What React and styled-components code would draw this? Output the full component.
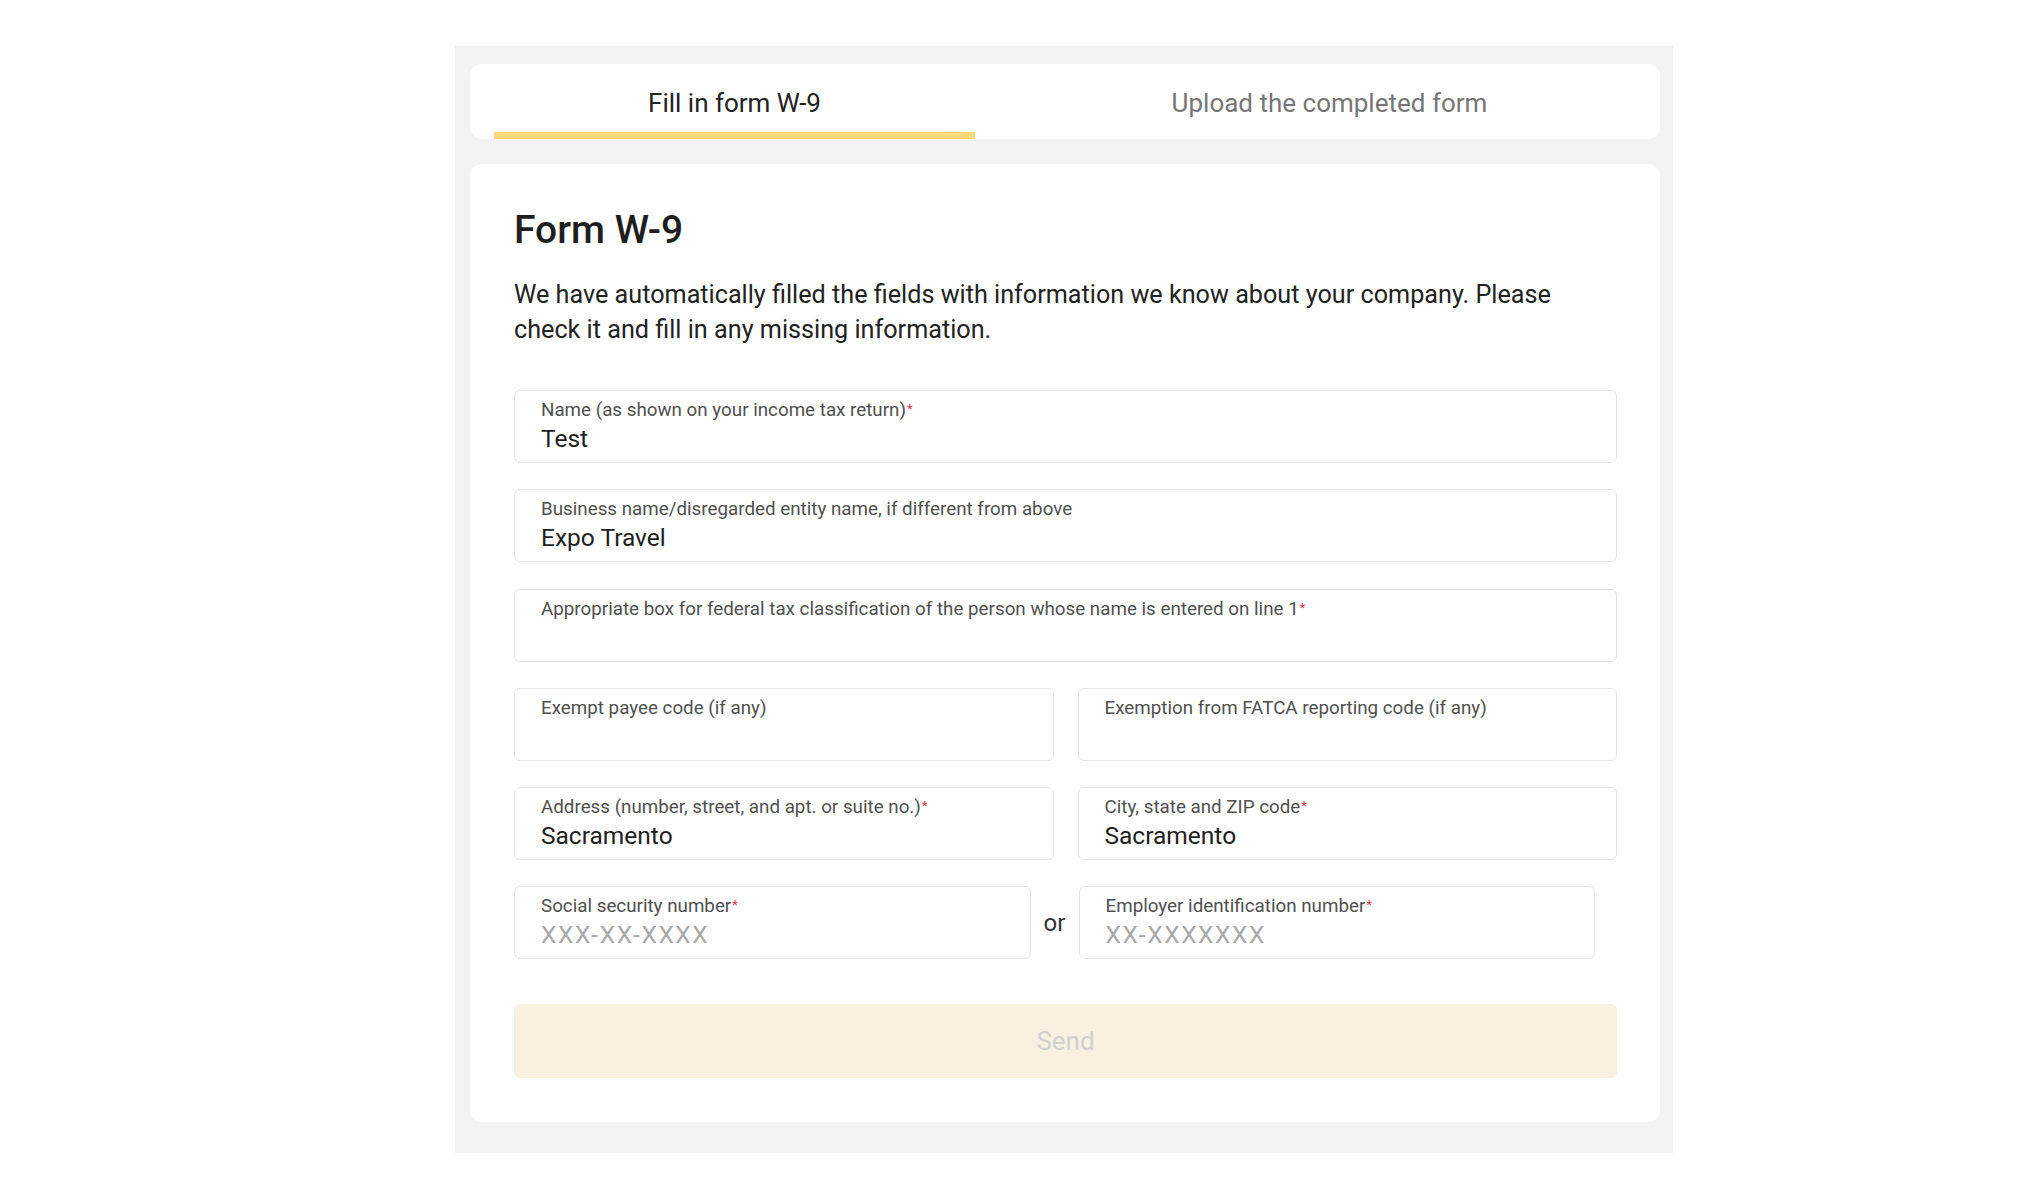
import React, { useState } from "react";
import styled, { createGlobalStyle } from "styled-components";

const GlobalStyle = createGlobalStyle`
  body {
    margin: 0;
    background: #ffffff;
    font-family: Roboto, "Liberation Sans", Arial, sans-serif;
    color: #222222;
  }
`;

const Page = styled.div`
  padding: 46px 0 48px 455px;
`;

const Panel = styled.div`
  width: 1218px;
  box-sizing: border-box;
  background-color: #f3f3f3;
  padding: 18px 13px 31px 15px;
  display: flex;
  flex-direction: column;
  gap: 25px;
`;

const TabBar = styled.div`
  display: grid;
  grid-template-columns: 1fr 1fr;
  height: 75px;
  background: #ffffff;
  border-radius: 12px;
`;

const Tab = styled.button`
  all: unset;
  cursor: pointer;
  justify-self: start;
  width: 481px;
  margin-left: 24px;
  box-sizing: border-box;
  display: flex;
  align-items: center;
  justify-content: center;
  padding-top: 9px;
  font-size: 26px;
  color: ${(p) => (p.active ? "#222222" : "#767676")};
  border-bottom: 7px solid ${(p) => (p.active ? "#ffd97c" : "transparent")};
`;

const Card = styled.div`
  background: #ffffff;
  border-radius: 12px;
  padding: 42px 43px 44px 44px;
`;

const Title = styled.h1`
  margin: 0;
  font-size: 39px;
  line-height: 48px;
  font-weight: 500;
  color: #1e1e1e;
`;

const Intro = styled.p`
  margin: 23px 0 43px;
  font-size: 25.2px;
  line-height: 35px;
  color: #222222;
`;

const Fields = styled.div`
  display: flex;
  flex-direction: column;
  gap: 26.3px;
`;

const Row = styled.div`
  display: grid;
  grid-template-columns: ${(p) => (p.split ? "1fr 48px 1fr" : "1fr 1fr")};
  column-gap: ${(p) => (p.split ? "0" : "24px")};
  padding-right: ${(p) => (p.split ? "22px" : "0")};
`;

const Field = styled.label`
  display: flex;
  flex-direction: column;
  height: 73px;
  box-sizing: border-box;
  padding: 8px 26px 0;
  border: 1.5px solid #e5e5e5;
  border-radius: 6px;
  background: #ffffff;
`;

const Label = styled.span`
  font-size: 18.8px;
  line-height: 22px;
  color: #505050;
  white-space: nowrap;
`;

const Required = styled.sup`
  color: #e5333a;
  font-size: 13px;
  vertical-align: top;
  position: relative;
  top: -1px;
  margin-left: 1px;
`;

const Input = styled.input`
  all: unset;
  margin-top: 3px;
  font-family: inherit;
  font-size: 24.5px;
  line-height: 30px;
  color: #1e1e1e;

  &::placeholder {
    color: #a8a8a8;
    letter-spacing: 1.6px;
  }
`;

const Or = styled.span`
  align-self: center;
  text-align: center;
  font-size: 24px;
  color: #333333;
`;

const SendButton = styled.button`
  all: unset;
  margin-top: 45px;
  width: 100%;
  height: 74px;
  box-sizing: border-box;
  border-radius: 6px;
  background: #faf0df;
  color: #d0d0d0;
  font-size: 26px;
  text-align: center;
  cursor: not-allowed;
`;

function TextField({ label, required, value, placeholder }) {
  return (
    <Field>
      <Label>
        {label}
        {required && <Required>*</Required>}
      </Label>
      <Input readOnly defaultValue={value} placeholder={placeholder} />
    </Field>
  );
}

export default function App() {
  const [tab, setTab] = useState(0);

  return (
    <>
      <GlobalStyle />
      <Page>
        <Panel>
          <TabBar>
            <Tab active={tab === 0} onClick={() => setTab(0)}>
              Fill in form W-9
            </Tab>
            <Tab active={tab === 1} onClick={() => setTab(1)}>
              Upload the completed form
            </Tab>
          </TabBar>

          <Card>
            <Title>Form W-9</Title>
            <Intro>
              We have automatically filled the fields with information we know
              about your company. Please check it and fill in any missing
              information.
            </Intro>

            <Fields>
              <TextField
                label="Name (as shown on your income tax return)"
                required
                value="Test"
              />
              <TextField
                label="Business name/disregarded entity name, if different from above"
                value="Expo Travel"
              />
              <TextField
                label="Appropriate box for federal tax classification of the person whose name is entered on line 1"
                required
              />
              <Row>
                <TextField label="Exempt payee code (if any)" />
                <TextField label="Exemption from FATCA reporting code (if any)" />
              </Row>
              <Row>
                <TextField
                  label="Address (number, street, and apt. or suite no.)"
                  required
                  value="Sacramento"
                />
                <TextField
                  label="City, state and ZIP code"
                  required
                  value="Sacramento"
                />
              </Row>
              <Row split>
                <TextField
                  label="Social security number"
                  required
                  placeholder="XXX-XX-XXXX"
                />
                <Or>or</Or>
                <TextField
                  label="Employer identification number"
                  required
                  placeholder="XX-XXXXXXX"
                />
              </Row>
            </Fields>

            <SendButton disabled>Send</SendButton>
          </Card>
        </Panel>
      </Page>
    </>
  );
}
